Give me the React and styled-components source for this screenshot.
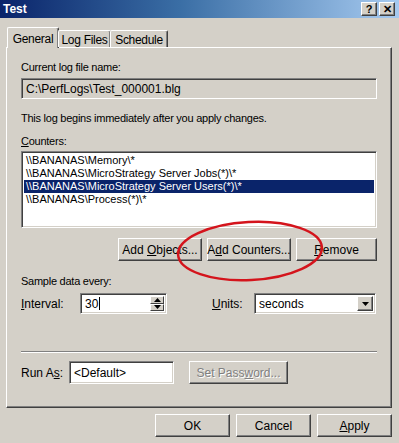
import React from "react";
import styled, { createGlobalStyle } from "styled-components";

const GlobalStyle = createGlobalStyle`
  html, body {
    margin: 0;
    padding: 0;
    background: #d4d0c8;
  }
  body {
    font-family: "Liberation Sans", Arial, sans-serif;
    font-size: 11px;
    color: #000;
  }
`;

const Window = styled.div`
  position: relative;
  width: 399px;
  height: 443px;
  background: #d4d0c8;
  display: flex;
  flex-direction: column;
  overflow: hidden;
`;

const TitleBar = styled.div`
  height: 18px;
  display: flex;
  align-items: center;
  justify-content: space-between;
  padding: 0 4px 0 3px;
  background: linear-gradient(to right, #0a246a 0%, #3a6ea5 45%, #a6caf0 100%);
  color: #fff;
  font-weight: bold;
  font-size: 12px;
`;

const TitleButtons = styled.div`
  display: flex;
  gap: 2px;
`;

const TitleButton = styled.div`
  width: 14px;
  height: 12px;
  background: #d4d0c8;
  border-top: 1px solid #fff;
  border-left: 1px solid #fff;
  border-right: 1px solid #404040;
  border-bottom: 1px solid #404040;
  box-shadow: inset -1px -1px 0 #808080;
  color: #000;
  display: flex;
  align-items: center;
  justify-content: center;
  font-size: 11px;
  font-weight: bold;
  line-height: 1;
`;

const Body = styled.div`
  flex: 1;
  padding: 8px 7px 0 6px;
  display: flex;
  flex-direction: column;
`;

const TabStrip = styled.div`
  display: flex;
  align-items: flex-end;
  height: 21px;
  padding-left: 1px;
  position: relative;
  z-index: 1;
`;

const Tab = styled.div`
  width: ${(p) => p.$w}px;
  height: ${(p) => (p.$active ? "21px" : "17px")};
  padding-top: ${(p) => (p.$active ? "2px" : "1px")};
  margin-left: ${(p) => (p.$active ? "0" : "-1px")};
  box-sizing: border-box;
  background: #d4d0c8;
  border-top: 1px solid #fff;
  border-left: 1px solid #fff;
  border-right: 1px solid #404040;
  box-shadow: inset -1px 0 0 #808080;
  border-radius: 2px 2px 0 0;
  display: flex;
  align-items: center;
  justify-content: center;
  font-size: 12px;
  letter-spacing: -0.3px;
  margin-bottom: ${(p) => (p.$active ? "-1px" : "0")};
`;

const Panel = styled.div`
  height: 361px;
  box-sizing: border-box;
  border-top: 1px solid #fff;
  border-left: 1px solid #fff;
  border-right: 1px solid #404040;
  border-bottom: 1px solid #404040;
  box-shadow: inset -1px -1px 0 #808080;
  padding: 13px 14px 0 14px;
  display: flex;
  flex-direction: column;
`;

const Label = styled.div`
  height: 13px;
  line-height: 13px;
  letter-spacing: -0.25px;
  margin-top: ${(p) => p.$mt || 0}px;
  white-space: nowrap;
`;

const Field = styled.div`
  box-sizing: border-box;
  height: ${(p) => p.$h || 21}px;
  width: ${(p) => (p.$w ? `${p.$w}px` : "auto")};
  margin-top: ${(p) => p.$mt || 0}px;
  background: ${(p) => (p.$disabled ? "#d4d0c8" : "#fff")};
  border-top: 1px solid #808080;
  border-left: 1px solid #808080;
  border-right: 1px solid #fff;
  border-bottom: 1px solid #fff;
  box-shadow: inset 1px 1px 0 #404040, inset -1px -1px 0 #d4d0c8;
  padding: 0 4px;
  display: flex;
  align-items: center;
  font-size: 12px;
  white-space: nowrap;
  position: relative;
`;

const ListBox = styled(Field)`
  flex-direction: column;
  align-items: stretch;
  padding: 2px 2px;
  font-size: 11px;
`;

const ListItem = styled.div`
  height: 13px;
  line-height: 13px;
  padding-left: 2px;
  background: ${(p) => (p.$selected ? "#0a246a" : "transparent")};
  color: ${(p) => (p.$selected ? "#fff" : "#000")};
`;

const ButtonRow = styled.div`
  display: flex;
  justify-content: flex-end;
  gap: ${(p) => p.$gap || 5}px;
  margin-top: ${(p) => p.$mt || 0}px;
`;

const Button = styled.div`
  box-sizing: border-box;
  width: ${(p) => p.$w}px;
  height: ${(p) => p.$h || 23}px;
  background: #d4d0c8;
  border-top: 1px solid #fff;
  border-left: 1px solid #fff;
  border-right: 1px solid #404040;
  border-bottom: 1px solid #404040;
  box-shadow: inset -1px -1px 0 #808080;
  display: flex;
  align-items: center;
  justify-content: center;
  font-size: 12px;
  color: ${(p) => (p.$disabled ? "#808080" : "#000")};
  text-shadow: ${(p) => (p.$disabled ? "1px 1px 0 #fff" : "none")};
  white-space: nowrap;
`;

const Row = styled.div`
  display: flex;
  align-items: center;
  margin-top: ${(p) => p.$mt || 0}px;
`;

const RowLabel = styled.div`
  width: ${(p) => p.$w}px;
  margin-left: ${(p) => p.$ml || 0}px;
  font-size: 12px;
  white-space: nowrap;
`;

const Spinner = styled.div`
  position: absolute;
  right: 2px;
  top: 2px;
  bottom: 2px;
  width: 14px;
  display: flex;
  flex-direction: column;
`;

const SpinPart = styled.div`
  flex: 1;
  box-sizing: border-box;
  background: #d4d0c8;
  border-top: 1px solid #fff;
  border-left: 1px solid #fff;
  border-right: 1px solid #404040;
  border-bottom: 1px solid #404040;
  display: flex;
  align-items: center;
  justify-content: center;
`;

const DropButton = styled(SpinPart)`
  position: absolute;
  right: 2px;
  top: 2px;
  bottom: 2px;
  width: 16px;
  box-shadow: inset -1px -1px 0 #808080;
`;

const Caret = styled.span`
  display: inline-block;
  width: 1px;
  height: 13px;
  background: #000;
  margin-left: 1px;
`;

const Separator = styled.div`
  height: 0;
  border-top: 1px solid #808080;
  border-bottom: 1px solid #fff;
  margin-top: ${(p) => p.$mt || 0}px;
`;

const Highlight = styled.svg`
  position: absolute;
  left: 170px;
  top: 216px;
  pointer-events: none;
`;

const U = styled.span`
  text-decoration: underline;
`;

const Tri = ({ up }) => (
  <svg width="7" height="4" viewBox="0 0 7 4">
    <polygon points={up ? "3.5,0 7,4 0,4" : "0,0 7,0 3.5,4"} fill="#000" />
  </svg>
);

export default function App() {
  return (
    <>
      <GlobalStyle />
      <Window>
        <TitleBar>
          <span>Test</span>
          <TitleButtons>
            <TitleButton>?</TitleButton>
            <TitleButton>✕</TitleButton>
          </TitleButtons>
        </TitleBar>
        <Body>
          <TabStrip>
            <Tab $active $w={52}>General</Tab>
            <Tab $w={53}>Log Files</Tab>
            <Tab $w={58}>Schedule</Tab>
          </TabStrip>
          <Panel>
            <Label>Current log file name:</Label>
            <Field $mt={4} $disabled>C:\PerfLogs\Test_000001.blg</Field>
            <Label $mt={13}>This log begins immediately after you apply changes.</Label>
            <Label $mt={10}>
              <U>C</U>ounters:
            </Label>
            <ListBox $mt={3} $h={77}>
              <ListItem>\\BANANAS\Memory\*</ListItem>
              <ListItem>\\BANANAS\MicroStrategy Server Jobs(*)\*</ListItem>
              <ListItem $selected>\\BANANAS\MicroStrategy Server Users(*)\*</ListItem>
              <ListItem>\\BANANAS\Process(*)\*</ListItem>
            </ListBox>
            <ButtonRow $mt={10} $gap={5}>
              <Button $w={84}>
                Add&nbsp;<U>O</U>bjects...
              </Button>
              <Button $w={84}>
                A<U>d</U>d Counters...
              </Button>
              <Button $w={81}>
                <U>R</U>emove
              </Button>
            </ButtonRow>
            <Label $mt={14}>Sample data every:</Label>
            <Row $mt={5}>
              <RowLabel $w={59}>
                <U>I</U>nterval:
              </RowLabel>
              <Field $w={87} $h={21}>
                30<Caret />
                <Spinner>
                  <SpinPart>
                    <Tri up />
                  </SpinPart>
                  <SpinPart>
                    <Tri />
                  </SpinPart>
                </Spinner>
              </Field>
              <RowLabel $w={42} $ml={45}>
                <U>U</U>nits:
              </RowLabel>
              <Field $w={122} $h={21}>
                seconds
                <DropButton>
                  <Tri />
                </DropButton>
              </Field>
            </Row>
            <Separator $mt={37} />
            <Row $mt={8}>
              <RowLabel $w={48}>
                Run A<U>s</U>:
              </RowLabel>
              <Field $w={105} $h={23}>&lt;Default&gt;</Field>
              <Button $w={99} $h={23} $disabled style={{ marginLeft: 15 }}>
                Set Pass<U>w</U>ord...
              </Button>
            </Row>
          </Panel>
          <ButtonRow $mt={6} $gap={6}>
            <Button $w={75}>OK</Button>
            <Button $w={75}>Cancel</Button>
            <Button $w={75}>
              <U>A</U>pply
            </Button>
          </ButtonRow>
        </Body>
        <Highlight width="160" height="70" viewBox="0 0 160 70">
          <ellipse
            cx="80"
            cy="35"
            rx="72"
            ry="29"
            fill="none"
            stroke="#d4141c"
            strokeWidth="2.5"
            transform="rotate(-3 80 35)"
          />
        </Highlight>
      </Window>
    </>
  );
}
